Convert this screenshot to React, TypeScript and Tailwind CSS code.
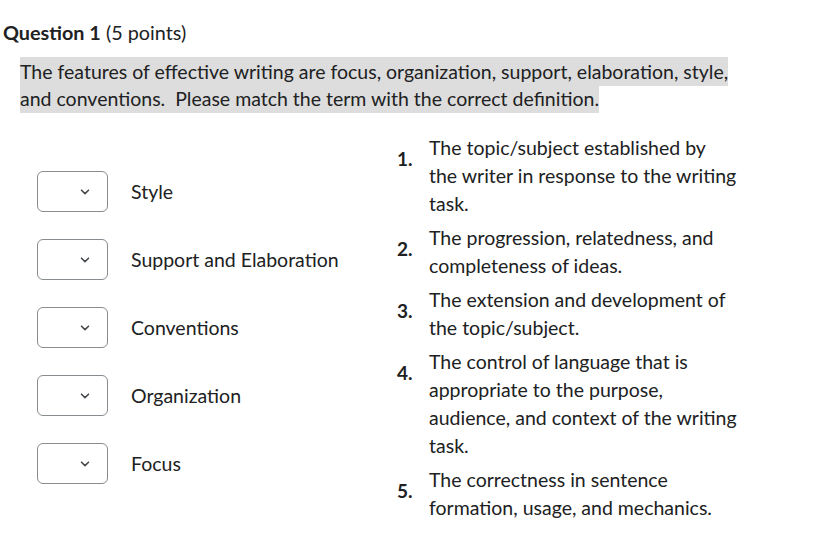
const terms = ["Style", "Support and Elaboration", "Conventions", "Organization", "Focus"];

const definitions = [
  "The topic/subject established by the writer in response to the writing task.",
  "The progression, relatedness, and completeness of ideas.",
  "The extension and development of the topic/subject.",
  "The control of language that is appropriate to the purpose, audience, and context of the writing task.",
  "The correctness in sentence formation, usage, and mechanics.",
];

function Chevron() {
  return (
    <svg width="10" height="6" viewBox="0 0 10 6" fill="none">
      <path d="M1.5 1.2 L5 4.6 L8.5 1.2" stroke="#494c4e" strokeWidth="1.6" strokeLinecap="round" strokeLinejoin="round" />
    </svg>
  );
}

function App() {
  return (
    <div className="w-[825px] h-[553px] bg-white text-[#202122] overflow-hidden" style={{ fontFamily: "Lato, 'Noto Sans', sans-serif" }}>
      <h2 className="pl-[3px] pt-[20px] text-[19.8px] leading-[24px]">
        <span className="font-bold">Question 1</span> <span>(5 points)</span>
      </h2>
      <p className="pl-[20px] mt-[14px] text-[19.5px] leading-[27px] w-[740px]">
        <span className="bg-[#dddddd] py-[3px]">
          The features of effective writing are focus, organization, support, elaboration, style, and conventions.&nbsp; Please match the term with the correct definition.
        </span>
      </p>
      <div className="flex mt-[22px]">
        <ul className="flex flex-col gap-[27px] pl-[37px] pt-[37px] w-[360px]">
          {terms.map((t) => (
            <li key={t} className="flex items-center">
              <div className="w-[71px] h-[41px] border border-[#868c8f] rounded-[6px] flex items-center justify-end pr-[17px]">
                <Chevron />
              </div>
              <span className="ml-[23px] text-[19.5px]">{t}</span>
            </li>
          ))}
        </ul>
        <ol className="flex flex-col gap-[6px] ml-[37px] w-[350px]">
          {definitions.map((d, i) => (
            <li key={i} className="flex">
              <span className="w-[32px] shrink-0 font-bold text-[19px] leading-[18px] mt-[16px]">{i + 1}.</span>
              <span className="text-[19.5px] leading-[28px] w-[308px]">{d}</span>
            </li>
          ))}
        </ol>
      </div>
    </div>
  );
}

export default App;
